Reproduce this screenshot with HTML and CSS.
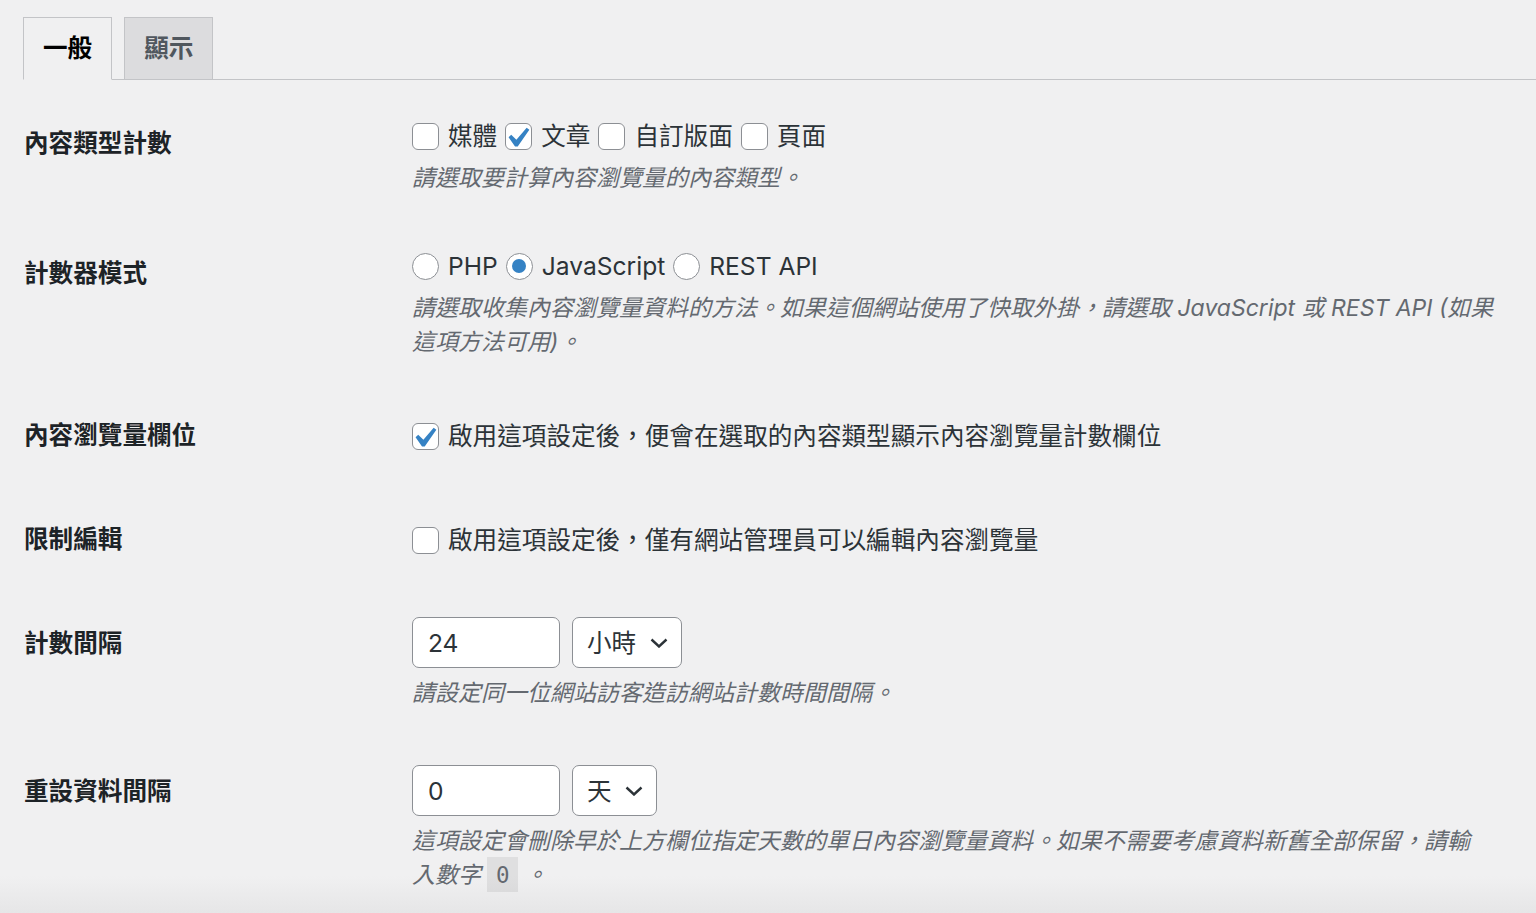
FILE: index.html
```html
<!DOCTYPE html>
<html lang="zh-Hant">
<head>
    <meta charset="UTF-8">
    <meta name="viewport" content="width=device-width, initial-scale=1.0">
    <title>內容瀏覽量設定</title>
    <link rel="stylesheet" href="styles.css">
</head>
<body>
    <nav class="tabs">
        <a class="tab tab-active" href="#">一般</a>
        <a class="tab" href="#">顯示</a>
    </nav>

    <form class="form">
        <div class="row row-types">
            <div class="th">內容類型計數</div>
            <div class="td">
                <div class="opts">
                    <label class="opt"><span class="cb"><input type="checkbox"></span>媒體</label>
                    <label class="opt"><span class="cb"><input type="checkbox" checked><svg class="tick" viewBox="0 0 20 20"><path d="M14.83 4.89l1.34.94-5.81 8.38H9.02L5.78 9.67l1.34-1.25 2.57 2.4z"/></svg></span>文章</label>
                    <label class="opt"><span class="cb"><input type="checkbox"></span>自訂版面</label>
                    <label class="opt"><span class="cb"><input type="checkbox"></span>頁面</label>
                </div>
                <p class="desc">請選取要計算內容瀏覽量的內容類型。</p>
            </div>
        </div>

        <div class="row row-mode">
            <div class="th">計數器模式</div>
            <div class="td">
                <div class="opts">
                    <label class="opt"><input type="radio" name="mode">PHP</label>
                    <label class="opt"><input type="radio" name="mode" checked>JavaScript</label>
                    <label class="opt"><input type="radio" name="mode">REST API</label>
                </div>
                <p class="desc">請選取收集內容瀏覽量資料的方法。如果這個網站使用了快取外掛，請選取 JavaScript 或 REST API (如果這項方法可用)。</p>
            </div>
        </div>

        <div class="row row-single">
            <div class="th">內容瀏覽量欄位</div>
            <div class="td">
                <div class="opts">
                    <label class="opt"><span class="cb"><input type="checkbox" checked><svg class="tick" viewBox="0 0 20 20"><path d="M14.83 4.89l1.34.94-5.81 8.38H9.02L5.78 9.67l1.34-1.25 2.57 2.4z"/></svg></span>啟用這項設定後，便會在選取的內容類型顯示內容瀏覽量計數欄位</label>
                </div>
            </div>
        </div>

        <div class="row row-single">
            <div class="th">限制編輯</div>
            <div class="td">
                <div class="opts">
                    <label class="opt"><span class="cb"><input type="checkbox"></span>啟用這項設定後，僅有網站管理員可以編輯內容瀏覽量</label>
                </div>
            </div>
        </div>

        <div class="row row-interval">
            <div class="th">計數間隔</div>
            <div class="td">
                <div class="inline">
                    <input class="num" type="text" value="24">
                    <span class="sel">
                        <select><option>小時</option></select>
                        <svg class="chev" viewBox="0 0 18 10"><path d="M1.5 1.5l7.5 7 7.5-7"/></svg>
                    </span>
                </div>
                <p class="desc">請設定同一位網站訪客造訪網站計數時間間隔。</p>
            </div>
        </div>

        <div class="row row-reset">
            <div class="th">重設資料間隔</div>
            <div class="td">
                <div class="inline">
                    <input class="num" type="text" value="0">
                    <span class="sel">
                        <select><option>天</option></select>
                        <svg class="chev" viewBox="0 0 18 10"><path d="M1.5 1.5l7.5 7 7.5-7"/></svg>
                    </span>
                </div>
                <p class="desc">這項設定會刪除早於上方欄位指定天數的單日內容瀏覽量資料。如果不需要考慮資料新舊全部保留，請輸<br>入數字 <code>0</code> 。</p>
            </div>
        </div>
    </form>
</body>
</html>
```

FILE: styles.css
```css
/* Page */
html {
    background: #f0f0f1;
}

body {
    margin: 0;
    min-height: 913px;
    background: linear-gradient(to bottom, #f0f0f1 876px, #e6e6e7 913px);
    font-family: Inter, "Noto Sans CJK TC", sans-serif;
    font-size: 24.6px;
    color: #2c3338;
}

/* Tabs */
.tabs {
    display: flex;
    gap: 12px;
    margin: 17px 0 0 23px;
    border-bottom: 1px solid #c3c4c7;
}

.tab {
    height: 61px;
    line-height: 61px;
    padding: 0 19px;
    margin-bottom: -1px;
    border: 1px solid #c3c4c7;
    background: #dcdcde;
    color: #50575e;
    font-weight: 600;
    text-decoration: none;
}

.tab-active {
    background: #f0f0f1;
    border-bottom-color: #f0f0f1;
    color: #000;
}

/* Form table */
.form {
    padding: 11px 0 0 24px;
}

.row {
    display: grid;
    grid-template-columns: 388px 1085px;
    align-items: start;
}

.th {
    padding: 34px 0;
    line-height: 36px;
    font-weight: 600;
    color: #1d2327;
}

.td {
    padding: 28px 0 26px;
}

.row-mode .td {
    padding-bottom: 24px;
}

.row-single .td {
    padding: 36px 0 0;
}

.row-interval .td {
    padding: 26px 0 29px;
}

.row-reset .td {
    padding: 26px 0 0;
}

/* Checkboxes and radios */
.opts {
    display: flex;
    align-items: center;
    height: 34px;
}

.opt {
    display: inline-flex;
    align-items: center;
    gap: 9px;
    margin-right: 8px;
    line-height: 34px;
}

.cb {
    position: relative;
    display: inline-flex;
}

input[type="checkbox"],
input[type="radio"] {
    appearance: none;
    width: 27px;
    height: 27px;
    margin: 0;
    box-sizing: border-box;
    border: 1.5px solid #8c8f94;
    background: #fff;
}

input[type="checkbox"] {
    border-radius: 6px;
}

input[type="radio"] {
    border-radius: 50%;
    display: grid;
    place-content: center;
}

input[type="radio"]:checked::before {
    content: "";
    width: 14px;
    height: 14px;
    border-radius: 50%;
    background: #3582c4;
}

.tick {
    position: absolute;
    left: -8px;
    top: -5px;
    width: 40px;
    height: 40px;
    fill: #3582c4;
    pointer-events: none;
}

/* Number + select */
.inline {
    display: flex;
    gap: 12px;
}

.num {
    width: 148px;
    height: 51px;
    box-sizing: border-box;
    margin: 0;
    padding: 0 15px;
    border: 1.5px solid #8c8f94;
    border-radius: 7px;
    background: #fff;
    font: 24.6px Inter, "Noto Sans CJK TC", sans-serif;
    color: #2c3338;
}

.sel {
    position: relative;
    display: inline-flex;
}

.sel select {
    appearance: none;
    height: 51px;
    margin: 0;
    padding: 0 44px 0 14px;
    border: 1.5px solid #8c8f94;
    border-radius: 7px;
    background: #fff;
    font: 24.6px Inter, "Noto Sans CJK TC", sans-serif;
    color: #2c3338;
}

.chev {
    position: absolute;
    right: 14px;
    top: 21px;
    width: 18px;
    height: 10px;
    fill: none;
    stroke: #2c3338;
    stroke-width: 2.4;
    pointer-events: none;
}

/* Descriptions */
.desc {
    margin: 8px 0 0;
    font-size: 23px;
    line-height: 34px;
    font-style: italic;
    color: #646970;
}

code {
    padding: 5px 8.5px 3.5px;
    background: rgba(0, 0, 0, 0.07);
    font-family: "DejaVu Sans Mono", monospace;
    font-style: normal;
    font-size: 22.5px;
}
```
